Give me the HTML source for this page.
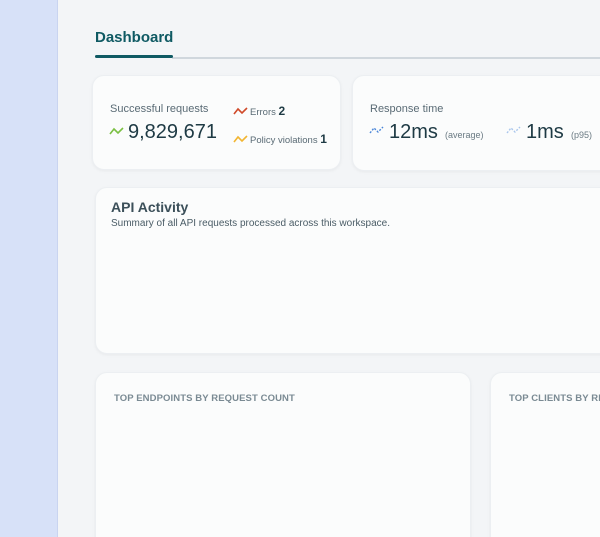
<!DOCTYPE html>
<html style="width:600px;height:537px;overflow:hidden"><head><style>
*{margin:0;padding:0;box-sizing:border-box}
body{width:600px;height:537px;overflow:hidden;background:#f3f5f7;font-family:"Liberation Sans",sans-serif;position:relative}
.side{position:absolute;left:0;top:0;width:58px;height:537px;background:#d7e1f8;border-right:1px solid #c9d4f0}
.abs{position:absolute}
.card{position:absolute;background:#fbfcfc;border-radius:12px;box-shadow:0 1px 3px rgba(0,0,0,.05);border:1px solid #eceff2}
.lbl{color:#5a6b75;font-size:11px}
.big{color:#1e3a44;font-size:20px}
.cap{color:#7a8a93;font-size:9.5px;font-weight:bold;letter-spacing:.1px}
</style></head><body>
<div class="side"></div>
<div class="abs" style="left:95px;top:29px;font-size:15px;font-weight:bold;color:#0f5a63">Dashboard</div>
<div class="abs" style="left:172px;top:57px;width:428px;height:2px;background:#d0d7dd"></div>
<div class="abs" style="left:95px;top:55px;width:78px;height:3px;border-radius:2px;background:#0f5a63"></div>

<div class="card" style="left:92px;top:75px;width:249px;height:95px">
 <div class="abs lbl" style="left:17px;top:27px">Successful requests</div>
 <svg class="abs" style="left:16px;top:50px" width="16" height="10"><polyline points="1,8 5,3 9,7 14,2" fill="none" stroke="#7bc043" stroke-width="1.6"/></svg>
 <div class="abs big" style="left:35px;top:45px">9,829,671</div>
 <svg class="abs" style="left:140px;top:30px" width="16" height="10"><polyline points="1,8 5,3 9,7 14,2" fill="none" stroke="#d04a2a" stroke-width="1.6"/></svg>
 <div class="abs lbl" style="left:157px;top:28px;font-size:9.5px">Errors <b style="color:#1e3a44;font-size:12px">2</b></div>
 <svg class="abs" style="left:140px;top:58px" width="16" height="10"><polyline points="1,8 5,3 9,7 14,2" fill="none" stroke="#f2b531" stroke-width="1.6"/></svg>
 <div class="abs lbl" style="left:157px;top:56px;font-size:9.5px">Policy violations <b style="color:#1e3a44;font-size:12px">1</b></div>
</div>

<div class="card" style="left:352px;top:75px;width:260px;height:96px">
 <div class="abs lbl" style="left:17px;top:27px">Response time</div>
 <svg class="abs" style="left:16px;top:49px" width="16" height="10"><polyline points="1,8 5,3 9,7 14,2" fill="none" stroke="#4a86d8" stroke-width="1.4" stroke-dasharray="2,1.5"/></svg>
 <div class="abs big" style="left:36px;top:45px">12ms</div>
 <div class="abs" style="left:92px;top:54px;font-size:9px;color:#6a7a83">(average)</div>
 <svg class="abs" style="left:153px;top:49px" width="16" height="10"><polyline points="1,8 5,3 9,7 14,2" fill="none" stroke="#a9c6ec" stroke-width="1.4" stroke-dasharray="2,1.5"/></svg>
 <div class="abs big" style="left:173px;top:45px">1ms</div>
 <div class="abs" style="left:218px;top:54px;font-size:9px;color:#6a7a83">(p95)</div>
</div>

<div class="card" style="left:95px;top:187px;width:520px;height:167px">
 <div class="abs" style="left:15px;top:11px;font-size:14px;font-weight:bold;color:#3b4f59">API Activity</div>
 <div class="abs" style="left:15px;top:30px;font-size:10px;color:#4a5c66">Summary of all API requests processed across this workspace.</div>
</div>

<div class="card" style="left:95px;top:372px;width:376px;height:180px">
 <div class="abs cap" style="left:18px;top:20px">TOP ENDPOINTS BY REQUEST COUNT</div>
</div>
<div class="card" style="left:490px;top:372px;width:200px;height:180px;overflow:hidden">
 <div class="abs cap" style="left:18px;top:20px;white-space:nowrap">TOP CLIENTS BY REQUEST COUNT</div>
</div>
</body></html>
